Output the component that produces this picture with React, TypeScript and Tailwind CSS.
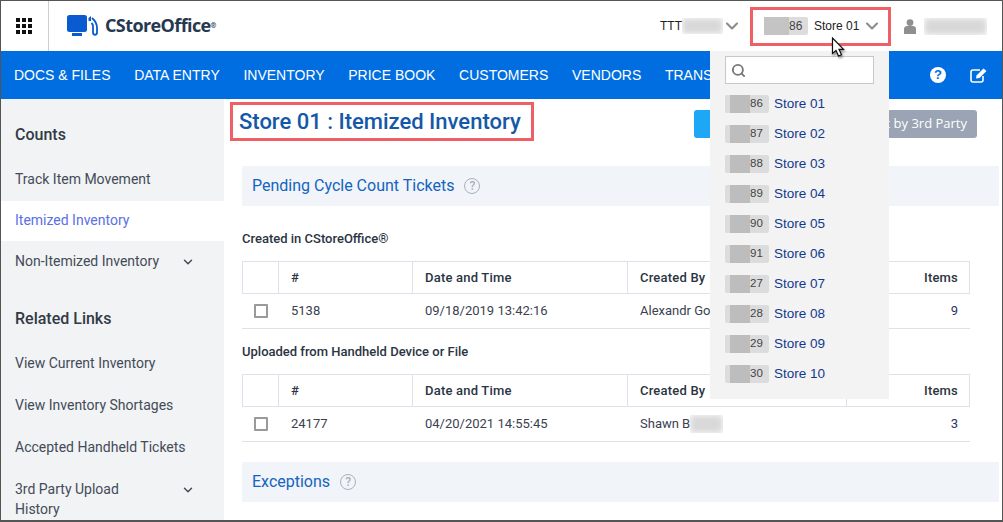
import { ChevronDown, Search } from "lucide-react";

const stores = [
  ["86", "Store 01"],
  ["87", "Store 02"],
  ["88", "Store 03"],
  ["89", "Store 04"],
  ["90", "Store 05"],
  ["91", "Store 06"],
  ["27", "Store 07"],
  ["28", "Store 08"],
  ["29", "Store 09"],
  ["30", "Store 10"],
];

const navItems = ["DOCS & FILES", "DATA ENTRY", "INVENTORY", "PRICE BOOK", "CUSTOMERS", "VENDORS", "TRANS"];

function Redacted({ className }: { className: string }) {
  return <span className={`inline-block overflow-hidden ${className}`}><span className="block h-full w-full bg-[#d8d8d8] blur-[3px]" /></span>;
}

function StoreChip({ code }: { code: string }) {
  return (
    <span className="flex h-[18px] w-[44px] items-center rounded-[2px] bg-[#dcdcdc] pl-[5px] text-[11.5px] text-[#444]">
      <span className="h-full w-[20px] bg-[#bdbdbd]" />
      <span>{code}</span>
    </span>
  );
}

function HelpIcon() {
  return (
    <span className="flex h-4 w-4 items-center justify-center rounded-full border-[1.5px] border-[#a9b1bd] text-[12px] font-medium text-[#a9b1bd]">?</span>
  );
}

function SectionBand({ title }: { title: string }) {
  return (
    <div className="flex h-10 items-center gap-[10px] bg-[#f1f4f9] pl-[10px] text-[16px] text-[#1464bd]">
      {title}
      <HelpIcon />
    </div>
  );
}

function Ticket({ id, date, by, items }: { id: string; date: string; by: React.ReactNode; items: string }) {
  return (
    <div className="w-[728px] text-[13px]">
      <div className="grid h-[33px] grid-cols-[36px_134px_215px_219px_1fr] items-center border border-[#dde1ea] font-medium tracking-[0.2px] text-[#2b3442]">
        <span className="h-full border-r border-[#dde1ea]" />
        <span className="flex h-full items-center border-r border-[#dde1ea] pl-[12px]">#</span>
        <span className="flex h-full items-center border-r border-[#dde1ea] pl-[12px]">Date and Time</span>
        <span className="flex h-full items-center border-r border-[#dde1ea] pl-[12px]">Created By</span>
        <span className="pr-[11px] text-right">Items</span>
      </div>
      <div className="grid h-[35px] grid-cols-[36px_134px_215px_219px_1fr] items-center border-b border-[#dde1ea] text-[#3a4250]">
        <span className="flex justify-center pl-[2px]"><span className="h-[14px] w-[14px] rounded-[1px] border-2 border-[#9a9a9a]" /></span>
        <span className="pl-[13px]">{id}</span>
        <span className="pl-[13px]">{date}</span>
        <span className="flex items-center pl-[13px]">{by}</span>
        <span className="pr-[12px] text-right text-[#2a3566]">{items}</span>
      </div>
    </div>
  );
}

function SideLink({ label, chevron, className }: { label: string; chevron?: boolean; className?: string }) {
  return (
    <div className={`flex items-start justify-between pl-[14px] pr-[29px] text-[14px] leading-[20px] text-[#444b57] ${className ?? ""}`}>
      <span>{label}</span>
      {chevron && <ChevronDown className="mt-[4px] h-[14px] w-[14px]" strokeWidth={2.5} />}
    </div>
  );
}

export default function App() {
  return (
    <div className="relative flex h-[522px] w-[1003px] flex-col overflow-hidden border border-b-2 border-[#555] bg-white font-['Roboto',sans-serif]">
      {/* Header */}
      <header className="flex h-[50px] shrink-0 items-center">
        <div className="flex h-full w-[48px] items-center justify-center border-r border-[#cfcfcf] pr-[1px]">
          <div className="grid grid-cols-3 gap-[2px]">
            {Array.from({ length: 9 }).map((_, i) => (
              <span key={i} className="h-[4px] w-[4px] bg-[#111]" />
            ))}
          </div>
        </div>
        <div className="ml-[18px] flex items-center gap-[7px]">
          <svg width="31" height="22" viewBox="0 0 31 22">
            <rect x="0" y="0" width="20" height="17" rx="2.5" fill="#0a5bd0" />
            <rect x="5" y="18" width="10" height="3" fill="#0a5bd0" />
            <path d="M21.5 3 L24 1 V6 H21.5 Z" fill="#0a5bd0" />
            <path d="M25 3 C28.5 6 30 9 30 13 V17.5 C30 20.5 26 20.5 26 17.5 V11 C26 9.5 25 8.5 24.5 8" fill="none" stroke="#0a5bd0" strokeWidth="1.8" />
          </svg>
          <span className="-mt-[2px] font-['Open_Sans',sans-serif] text-[18px] font-bold tracking-[-0.6px] text-[#26384f]">
            CStoreOffice<sup className="text-[7px]">®</sup>
          </span>
        </div>
        <div className="ml-auto flex items-center">
          <span className="font-['Liberation_Sans',sans-serif] text-[12px] text-[#222]">TTT</span>
          <Redacted className="h-[16px] w-[41px]" />
          <ChevronDown className="-ml-[1px] h-[20px] w-[20px] text-[#8a8a8a]" strokeWidth={2.5} />
          <div className="ml-[8px] flex h-[39px] w-[141px] items-center border-[3px] border-[#ee6066] pl-[11px] font-['Liberation_Sans',sans-serif] text-[12px] text-[#222]">
            <span className="flex h-[18px] w-[44px] items-center rounded-[2px] bg-[#dcdcdc] text-[#444]">
              <span className="h-full w-[25px] bg-[#c4c4c4]" />
              86
            </span>
            <span className="ml-[6px]">Store 01</span>
            <ChevronDown className="ml-[3px] h-[20px] w-[20px] text-[#8a8a8a]" strokeWidth={2.5} />
          </div>
          <svg className="ml-[13px]" width="12" height="15" viewBox="0 0 12 15">
            <circle cx="6" cy="3.6" r="3.4" fill="#8f8f8f" />
            <path d="M0 15 V10 C0 8 1.5 7 3 7 H9 C10.5 7 12 8 12 10 V15 Z" fill="#8f8f8f" />
          </svg>
          <Redacted className="ml-[8px] mr-[15px] h-[17px] w-[63px]" />
        </div>
      </header>

      {/* Nav */}
      <nav className="flex h-[48px] shrink-0 items-center gap-[23.7px] bg-[#006ee0] pl-[13px] font-['Liberation_Sans',sans-serif] text-[14px] text-white">
        {navItems.map((n) => (
          <span key={n}>{n}</span>
        ))}
        <div className="ml-auto flex items-center gap-[24px] pr-[14px]">
          <span className="flex h-[16px] w-[16px] items-center justify-center rounded-full bg-white text-[13px] font-bold text-[#006ee0]">?</span>
          <svg width="18" height="16" viewBox="0 0 18 16" fill="none" stroke="white" strokeWidth="1.6">
            <path d="M10 3 H3 C2 3 1 4 1 5 V13 C1 14 2 15 3 15 H11 C12 15 13 14 13 13 V9" />
            <path d="M6.5 8.5 L13.5 1.5 L16.5 4 L9.5 11 L6 11.5 Z" fill="white" stroke="none" />
          </svg>
        </div>
      </nav>

      <div className="flex min-h-0 flex-1">
        {/* Sidebar */}
        <aside className="w-[223px] shrink-0 bg-[#f1f3f5]">
          <h3 className="pl-[14px] pt-[26px] text-[16px] font-medium leading-[20px] text-[#333a45]">Counts</h3>
          <SideLink label="Track Item Movement" className="mt-[24px]" />
          <SideLink label="Itemized Inventory" className="mt-[12px] bg-white pb-[11px] pt-[9px] !text-[#5b6fe6]" />
          <SideLink label="Non-Itemized Inventory" chevron className="mt-[10px]" />
          <h3 className="pl-[14px] pt-[38px] text-[16px] font-medium leading-[20px] text-[#333a45]">Related Links</h3>
          <SideLink label="View Current Inventory" className="mt-[24px]" />
          <SideLink label="View Inventory Shortages" className="mt-[22px]" />
          <SideLink label="Accepted Handheld Tickets" className="mt-[22px]" />
          <div className="mt-[22px] flex items-start justify-between pl-[14px] pr-[29px] text-[14px] leading-[20px] text-[#444b57]">
            <span className="w-[130px]">3rd Party Upload History</span>
            <ChevronDown className="mt-[4px] h-[14px] w-[14px]" strokeWidth={2.5} />
          </div>
        </aside>

        {/* Main */}
        <main className="min-w-0 flex-1 pl-[18px] pr-[3px]">
          <div className="flex items-start justify-between pr-[22px]">
            <h1 className="-ml-[12px] mt-[3px] flex h-[39px] w-[304px] items-center border-[3px] border-[#ee6066] pl-[6px] text-[22px] font-medium text-[#1459a8]">
              Store 01 : Itemized Inventory
            </h1>
            <div className="mt-[11px] flex h-[28px] gap-[3px] text-[13px] text-white">
              <span className="w-[90px] rounded-[3px] bg-[#1ea7f5]" />
              <span className="flex w-[190px] items-center justify-end rounded-[3px] bg-[#9aa4b4] pr-[10px] font-['Open_Sans',sans-serif]">Edit by 3rd Party</span>
            </div>
          </div>
          <div className="mt-[25px]">
            <SectionBand title="Pending Cycle Count Tickets" />
          </div>
          <p className="mt-[25px] text-[13px] font-medium leading-[16px] text-[#2b3442]">Created in CStoreOffice®</p>
          <div className="mt-[14px]">
            <Ticket id="5138" date="09/18/2019 13:42:16" by="Alexandr Go" items="9" />
          </div>
          <p className="mt-[15px] text-[13px] font-medium leading-[16px] text-[#2b3442]">Uploaded from Handheld Device or File</p>
          <div className="mt-[14px]">
            <Ticket id="24177" date="04/20/2021 14:55:45" by={<>Shawn B<Redacted className="h-[18px] w-[33px]" /></>} items="3" />
          </div>
          <div className="mt-[20px]">
            <SectionBand title="Exceptions" />
          </div>
        </main>
      </div>

      {/* Store dropdown */}
      <div className="absolute left-[709px] top-[50px] h-[348px] w-[179px] bg-[#f3f3f3] px-[15px] pt-[5px] font-['Liberation_Sans',sans-serif]">
        <div className="flex h-[28px] w-[149px] items-center border border-[#c8c8c8] bg-white pl-[5px]">
          <Search className="h-[15px] w-[15px] text-[#777]" strokeWidth={3} />
        </div>
        <ul className="mt-[5px]">
          {stores.map(([code, name]) => (
            <li key={name} className="flex h-[30px] items-center gap-[5px] text-[13.5px] text-[#123a8c]">
              <StoreChip code={code} />
              <span>{name}</span>
            </li>
          ))}
        </ul>
      </div>

      {/* Mouse pointer */}
      <svg className="absolute left-[830px] top-[36px] drop-shadow-[1px_2px_1px_rgba(0,0,0,0.4)]" width="16" height="22" viewBox="0 0 16 22">
        <path d="M1.5 1 V16.5 L5 13.5 L7.5 19 L10.5 17.7 L8 12.3 H12.5 Z" fill="white" stroke="#111" strokeWidth="1.2" />
      </svg>
    </div>
  );
}
